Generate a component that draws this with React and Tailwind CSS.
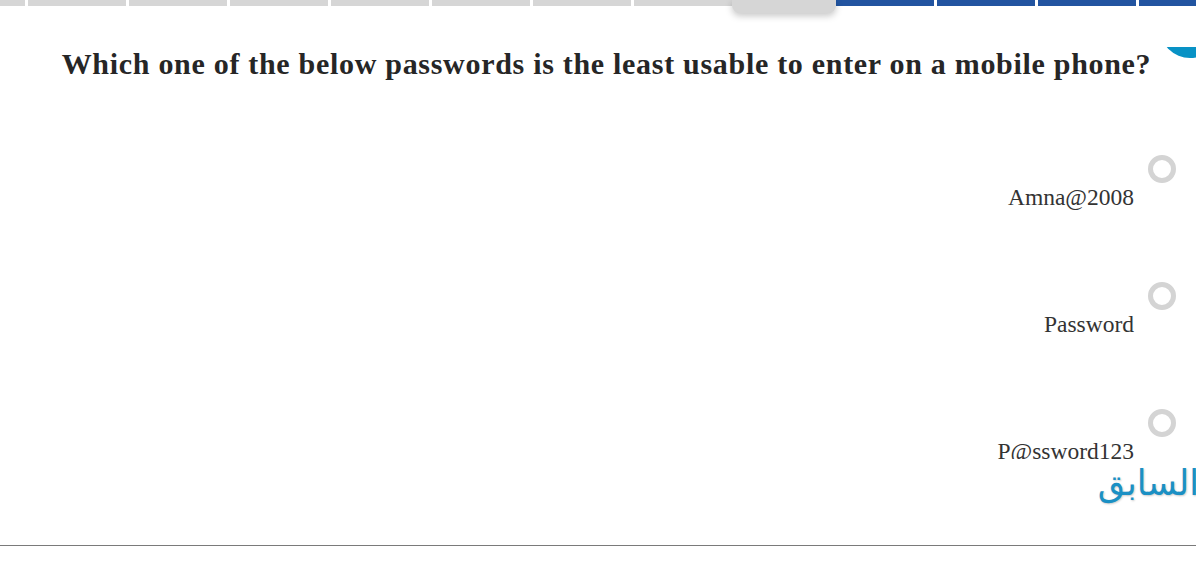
const segments = [
  'gray', 'gray', 'gray', 'gray', 'gray', 'gray', 'gray', 'gray',
  'current', 'blue', 'blue', 'blue', 'blue',
];

const options = ['Amna@2008', 'Password', 'P@ssword123'];

const ProgressBar = () => (
  <div className="flex h-[6px] gap-[3px] ml-[-73px]">
    {segments.map((s, i) =>
      s === 'current' ? (
        <div
          key={i}
          className="w-[104px] h-[13px] shrink-0 -mx-[3px] rounded-b-[8px] bg-[#d6d6d6] shadow-[0_3px_7px_rgba(0,0,0,0.22)] relative z-10"
        />
      ) : (
        <div
          key={i}
          className={`w-[98px] h-[6px] shrink-0 ${s === 'blue' ? 'bg-[#2254a0]' : 'bg-[#d6d6d6]'}`}
        />
      )
    )}
  </div>
);

const Option = ({ label }) => (
  <div className="flex flex-col items-end mb-[71px]">
    <div className="w-[28px] h-[28px] mr-[20px] rounded-full border-[5px] border-[#d4d4d4]" />
    <p className="pr-[62px] text-[23.5px] leading-[28px] text-[#333] font-['Liberation_Serif',serif]">
      {label}
    </p>
  </div>
);

export default function App() {
  return (
    <div className="relative w-full h-[568px] bg-white overflow-hidden">
      <ProgressBar />

      {/* timer badge, cut off at the top */}
      <div className="absolute top-[47px] right-0 w-[40px] h-[12px] overflow-hidden">
        <div className="absolute left-[4px] top-[-49px] w-[60px] h-[60px] rounded-full bg-[#0892c5]" />
      </div>

      <h1 className="mt-[42px] pl-[17px] text-center text-[30px] leading-[32px] tracking-[0.7px] font-bold text-[#262626] font-['Liberation_Serif',serif]">
        Which one of the below passwords is the least usable to enter on a mobile phone?
      </h1>

      <div className="h-[379px] overflow-hidden pt-[75px]">
        {options.map((o) => (
          <Option key={o} label={o} />
        ))}
      </div>

      <div className="flex justify-end mr-[-3px] pt-[2px]">
        <span
          dir="rtl"
          className="text-[35px] leading-[44px] text-[#1b90c4] font-['DejaVu_Sans',sans-serif] [text-shadow:1px_1px_2px_rgba(0,0,0,0.2)]"
        >
          السابق
        </span>
      </div>

      <div className="mt-[40px] border-t border-[#7a7a7a]" />
    </div>
  );
}
